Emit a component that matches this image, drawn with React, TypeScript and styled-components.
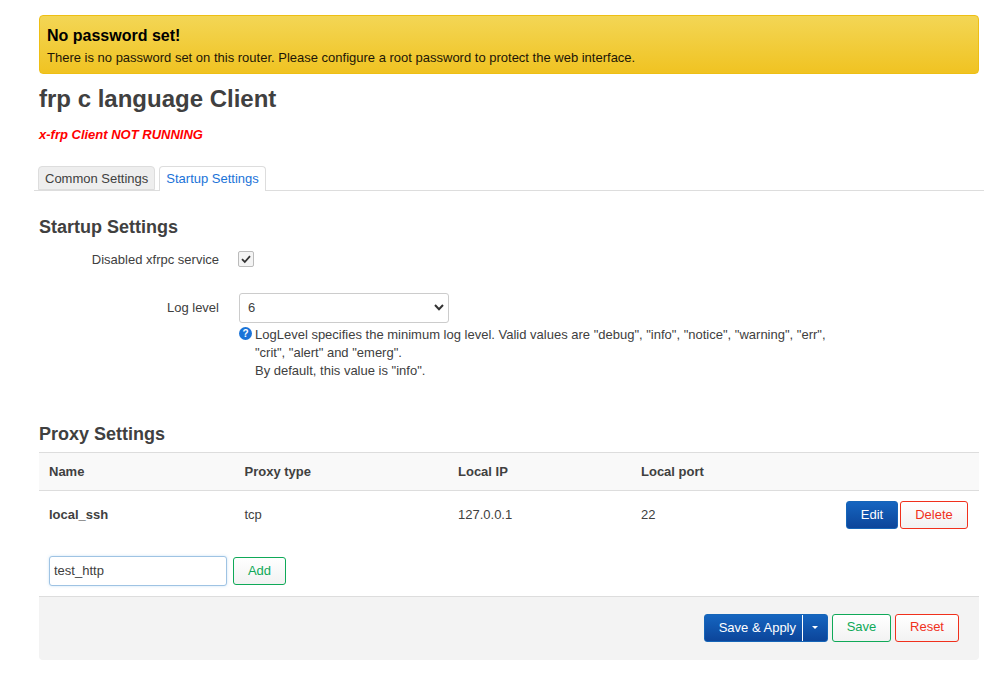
import React from "react";
import styled, { createGlobalStyle } from "styled-components";

const Global = createGlobalStyle`
  html, body { margin: 0; padding: 0; background: #fff; }
  body { font-family: "Liberation Sans", Arial, sans-serif; font-size: 13px; color: #404040; }
`;

const Page = styled.div`
  width: 1005px;
  height: 691px;
  padding: 15px 26px 0 39px;
  box-sizing: border-box;
  overflow: hidden;
`;

const Alert = styled.div`
  box-sizing: border-box;
  height: 59px;
  padding: 10px 7px 0;
  border: 1px solid #eebf14;
  border-radius: 4px;
  background: linear-gradient(#f3d655, #f0c322);
  color: #000;
`;
const AlertTitle = styled.div`
  font-size: 16px;
  font-weight: bold;
  line-height: 20px;
  margin-bottom: 3px;
`;
const AlertText = styled.div`
  line-height: 18px;
  color: #1d1606;
`;

const Title = styled.h2`
  margin: 12px 0 0;
  font-size: 24px;
  line-height: 26px;
  font-weight: bold;
  color: #404040;
`;
const Status = styled.div`
  margin-top: 14px;
  line-height: 18px;
  font-size: 13px;
  font-weight: bold;
  font-style: italic;
  color: #f00;
`;

const Tabs = styled.div`
  display: flex;
  gap: 4px;
  margin: 22px -5px 0 -5px;
  padding-left: 4px;
  height: 24px;
  border-bottom: 1px solid #ddd;
`;
const Tab = styled.div<{ $active?: boolean }>`
  box-sizing: border-box;
  height: ${(p) => (p.$active ? 25 : 24)}px;
  padding: 0 6px;
  line-height: 23px;
  border: 1px solid #ddd;
  border-bottom: ${(p) => (p.$active ? "0" : "1px solid #ddd")};
  border-radius: 4px 4px 0 0;
  background: ${(p) => (p.$active ? "#fff" : "#eee")};
  color: ${(p) => (p.$active ? "#1a73d8" : "#404040")};
  position: relative;
  z-index: 1;
`;

const SectionTitle = styled.h3<{ $top: number }>`
  margin: ${(p) => p.$top}px 0 0;
  font-size: 18px;
  line-height: 22px;
  font-weight: bold;
  color: #404040;
`;

const FormRow = styled.div<{ $top: number }>`
  display: grid;
  grid-template-columns: 180px 1fr;
  column-gap: 20px;
  margin-top: ${(p) => p.$top}px;
`;
const Label = styled.div<{ $h: number }>`
  text-align: right;
  line-height: ${(p) => p.$h}px;
  color: #404040;
`;
const Check = styled.span`
  box-sizing: border-box;
  width: 16px;
  height: 16px;
  margin-left: -1px;
  display: flex;
  align-items: center;
  justify-content: center;
  border: 1px solid #bbb;
  border-radius: 2px;
  background: #f4f4f4;
`;
const SelectBox = styled.div`
  box-sizing: border-box;
  width: 210px;
  height: 30px;
  padding: 0 4px 2px 8px;
  display: flex;
  align-items: center;
  justify-content: space-between;
  border: 1px solid #ccc;
  border-radius: 3px;
  background: #fff;
  color: #404040;
`;
const Help = styled.div`
  display: flex;
  align-items: flex-start;
  gap: 3px;
  margin-top: 3px;
  width: 600px;
  line-height: 18px;
`;
const HelpIcon = styled.svg`
  flex: none;
  margin-top: 1px;
`;

const Table = styled.div`
  margin-top: 7px;
`;
const Row = styled.div<{ $head?: boolean }>`
  display: grid;
  grid-template-columns: 195.5px 213.5px 183px 1fr auto;
  align-items: center;
  box-sizing: border-box;
  height: ${(p) => (p.$head ? 39 : 48)}px;
  padding: 0 10px ${(p) => (p.$head ? 0 : 2)}px;
  border-top: ${(p) => (p.$head ? "1px solid #ddd" : "0")};
  border-bottom: ${(p) => (p.$head ? "1px solid #ddd" : "0")};
  background: ${(p) => (p.$head ? "#f9f9f9" : "#fff")};
  font-weight: ${(p) => (p.$head ? "bold" : "normal")};
`;
const NameCell = styled.div`
  font-weight: bold;
`;
const Actions = styled.div`
  display: flex;
  gap: 2px;
  margin: 0 1px -2px 0;
`;
const Btn = styled.button<{ $kind: "primary" | "danger" | "success"; $w: number }>`
  box-sizing: border-box;
  width: ${(p) => p.$w}px;
  height: 28px;
  padding: 0 0 2px;
  font: inherit;
  font-size: 13px;
  border-radius: 3px;
  border: 1px solid
    ${(p) => (p.$kind === "primary" ? "#1565b8" : p.$kind === "danger" ? "#f0301c" : "#0fa958")};
  background: ${(p) =>
    p.$kind === "primary" ? "linear-gradient(#1565c0, #0c459a)" : "linear-gradient(#fff, #f2f2f2)"};
  color: ${(p) => (p.$kind === "primary" ? "#fff" : p.$kind === "danger" ? "#f0301c" : "#0fa958")};
`;

const AddRow = styled.div`
  display: flex;
  align-items: center;
  gap: 6px;
  margin-top: 17px;
  padding-left: 10px;
  height: 30px;
`;
const NameInput = styled.input`
  box-sizing: border-box;
  width: 178px;
  height: 30px;
  padding: 0 4px 2px;
  font: inherit;
  color: #404040;
  border: 1px solid #9fc3e3;
  border-radius: 3px;
  box-shadow: 0 0 3px rgba(102, 175, 233, 0.35);
  outline: none;
`;

const Footer = styled.div`
  display: flex;
  justify-content: flex-end;
  align-items: center;
  gap: 4px;
  box-sizing: border-box;
  height: 64px;
  margin-top: 10px;
  padding: 0 20px 2px 0;
  border-top: 1px solid #ddd;
  border-radius: 0 0 4px 4px;
  background: #f3f3f3;
`;
const SplitButton = styled.div`
  box-sizing: border-box;
  display: flex;
  width: 124px;
  height: 28px;
  border: 1px solid #1565b8;
  border-radius: 3px;
  background: linear-gradient(#1565c0, #0c459a);
  color: #fff;
`;
const SplitMain = styled.div`
  box-sizing: border-box;
  width: 98px;
  text-align: right;
  padding-right: 6px;
  line-height: 25px;
  border-right: 1px solid #fff;
`;
const SplitCaret = styled.div`
  flex: 1;
  display: flex;
  align-items: center;
  justify-content: center;
`;
const Caret = styled.span`
  width: 0;
  height: 0;
  border-left: 3px solid transparent;
  border-right: 3px solid transparent;
  border-top: 3px solid #fff;
`;

export default function App() {
  return (
    <Page>
      <Global />
      <Alert>
        <AlertTitle>No password set!</AlertTitle>
        <AlertText>There is no password set on this router. Please configure a root password to protect the web interface.</AlertText>
      </Alert>
      <Title>frp c language Client</Title>
      <Status>x-frp Client NOT RUNNING</Status>
      <Tabs>
        <Tab>Common Settings</Tab>
        <Tab $active>Startup Settings</Tab>
      </Tabs>
      <SectionTitle $top={25}>Startup Settings</SectionTitle>
      <FormRow $top={13}>
        <Label $h={18}>Disabled xfrpc service</Label>
        <Check>
          <svg width="12" height="12" viewBox="0 0 12 12" fill="none">
            <path d="M2 6.2 L4.8 9 L10 3.2" stroke="#333" strokeWidth="1.8" />
          </svg>
        </Check>
      </FormRow>
      <FormRow $top={24}>
        <Label $h={30}>Log level</Label>
        <div>
          <SelectBox>
            6
            <svg width="10" height="7" viewBox="0 0 10 7" fill="none">
              <path d="M1 1 L5 5.2 L9 1" stroke="#333" strokeWidth="2" />
            </svg>
          </SelectBox>
          <Help>
            <HelpIcon width="13" height="13" viewBox="0 0 13 13">
              <circle cx="6.5" cy="6.5" r="6.5" fill="#1a73d8" />
              <text x="6.5" y="10.2" textAnchor="middle" fontSize="10" fontWeight="bold" fill="#fff" fontFamily="Liberation Sans">?</text>
            </HelpIcon>
            <div>
              LogLevel specifies the minimum log level. Valid values are "debug", "info", "notice", "warning", "err", "crit", "alert" and "emerg".
              <br />
              By default, this value is "info".
            </div>
          </Help>
        </div>
      </FormRow>
      <SectionTitle $top={43}>Proxy Settings</SectionTitle>
      <Table>
        <Row $head>
          <div>Name</div>
          <div>Proxy type</div>
          <div>Local IP</div>
          <div>Local port</div>
          <div />
        </Row>
        <Row>
          <NameCell>local_ssh</NameCell>
          <div>tcp</div>
          <div>127.0.0.1</div>
          <div>22</div>
          <Actions>
            <Btn $kind="primary" $w={52}>Edit</Btn>
            <Btn $kind="danger" $w={68}>Delete</Btn>
          </Actions>
        </Row>
      </Table>
      <AddRow>
        <NameInput defaultValue="test_http" />
        <Btn $kind="success" $w={53}>Add</Btn>
      </AddRow>
      <Footer>
        <SplitButton>
          <SplitMain>Save &amp; Apply</SplitMain>
          <SplitCaret><Caret /></SplitCaret>
        </SplitButton>
        <Btn $kind="success" $w={59}>Save</Btn>
        <Btn $kind="danger" $w={64}>Reset</Btn>
      </Footer>
    </Page>
  );
}
